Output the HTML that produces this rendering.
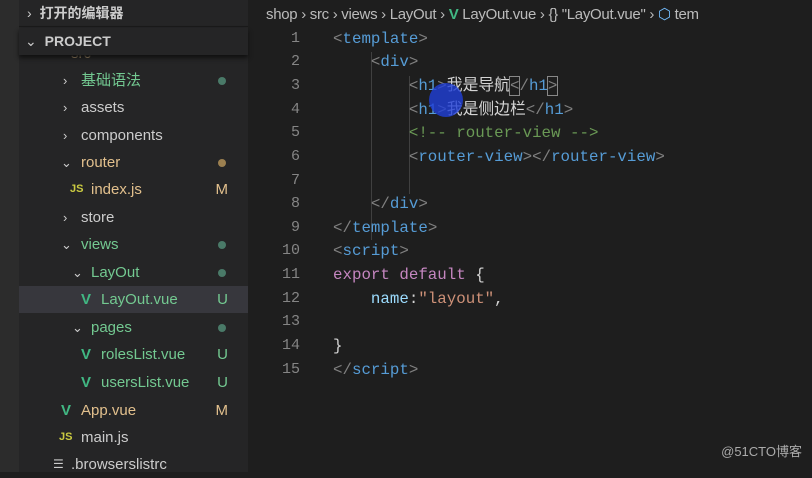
<!DOCTYPE html>
<html><head><meta charset="utf-8"><style>
*{margin:0;padding:0;box-sizing:border-box}
body{width:812px;height:472px;overflow:hidden;background:#1e1e1e;font-family:"Liberation Sans","Noto Sans CJK SC",sans-serif;position:relative}
#act{position:absolute;left:0;top:0;width:19px;height:472px;background:#2c2c2c}
#side{position:absolute;left:19px;top:0;width:229px;height:472px;background:#252526;color:#ccc}
.hdr{position:absolute;left:0;width:229px;height:27px;font-size:14px;font-weight:bold;color:#ccc;line-height:27px}
.row{position:absolute;left:0;width:229px;height:27px;line-height:27px;font-size:15px}
.row .b{position:absolute;right:20px;top:0}
.dot{position:absolute;right:22px;top:10px;width:8px;height:8px;border-radius:50%}
.chev{position:absolute;font-size:13px;color:#ccc}
.vue{color:#41b883;font-weight:bold;position:absolute;font-size:15px}
.js{color:#cbcb41;font-weight:bold;font-size:11px;position:absolute}
.g{color:#73c991}.o{color:#e2c08d}
#ed{position:absolute;left:248px;top:0;right:0;bottom:0}
.bc{position:absolute;top:5px;left:18px;font-size:15px;color:#bbb;white-space:nowrap;letter-spacing:-0.3px}
.ln{position:absolute;left:0;width:52px;text-align:right;font-family:"Liberation Mono",monospace;font-size:15px;color:#858585;line-height:20px;height:20px}
.cl{position:absolute;left:85px;font-family:"Liberation Mono","Noto Sans CJK SC",monospace;font-size:15.8px;color:#d4d4d4;white-space:pre;line-height:20px;height:20px}
.p{color:#808080}.t{color:#569cd6}.c{color:#6a9955}.s{color:#ce9178}.k{color:#c586c0}.n{color:#9cdcfe}
.guide{position:absolute;width:1px;background:#404040}
</style></head><body>
<div id="act"></div>
<div id="side">
<div class="row" style="top:40px"><span class="o" style="position:absolute;left:52px">src</span></div>
<div class="hdr" style="top:0;border-bottom:1px solid #1a1a1a;background:#252526"><span style="margin-left:8px;font-weight:normal">›</span> <span style="margin-left:4px">打开的编辑器</span></div>
<div class="hdr" style="top:28px;background:#252526;z-index:2;box-shadow:0 3px 4px #111"><span style="margin-left:6px;font-weight:normal">⌄</span> <span style="margin-left:4px">PROJECT</span></div>
<div class="row" style="top:67px"><span class="chev" style="left:44px">›</span><span class="g" style="position:absolute;left:62px">基础语法</span><span class="dot" style="background:#4a7a68"></span></div>
<div class="row" style="top:94px"><span class="chev" style="left:44px">›</span><span style="position:absolute;left:62px">assets</span></div>
<div class="row" style="top:122px"><span class="chev" style="left:44px">›</span><span style="position:absolute;left:62px">components</span></div>
<div class="row" style="top:149px"><span class="chev" style="left:42px">⌄</span><span class="o" style="position:absolute;left:62px">router</span><span class="dot" style="background:#9c8050"></span></div>
<div class="row" style="top:176px"><span class="js" style="left:51px">JS</span><span class="o" style="position:absolute;left:72px">index.js</span><span class="b o">M</span></div>
<div class="row" style="top:204px"><span class="chev" style="left:44px">›</span><span style="position:absolute;left:62px">store</span></div>
<div class="row" style="top:231px"><span class="chev" style="left:42px">⌄</span><span class="g" style="position:absolute;left:62px">views</span><span class="dot" style="background:#4a7a68"></span></div>
<div class="row" style="top:259px"><span class="chev" style="left:53px">⌄</span><span class="g" style="position:absolute;left:72px">LayOut</span><span class="dot" style="background:#4a7a68"></span></div>
<div class="row" style="top:286px;background:#37373d"><span class="vue" style="left:62px">V</span><span class="g" style="position:absolute;left:82px">LayOut.vue</span><span class="b g">U</span></div>
<div class="row" style="top:314px"><span class="chev" style="left:53px">⌄</span><span class="g" style="position:absolute;left:72px">pages</span><span class="dot" style="background:#4a7a68"></span></div>
<div class="row" style="top:341px"><span class="vue" style="left:62px">V</span><span class="g" style="position:absolute;left:82px">rolesList.vue</span><span class="b g">U</span></div>
<div class="row" style="top:369px"><span class="vue" style="left:62px">V</span><span class="g" style="position:absolute;left:82px">usersList.vue</span><span class="b g">U</span></div>
<div class="row" style="top:397px"><span class="vue" style="left:42px">V</span><span class="o" style="position:absolute;left:62px">App.vue</span><span class="b o">M</span></div>
<div class="row" style="top:424px"><span class="js" style="left:40px">JS</span><span style="position:absolute;left:62px">main.js</span></div>
<div class="row" style="top:451px"><span style="position:absolute;left:34px;font-size:12px">☰</span><span style="position:absolute;left:52px">.browserslistrc</span></div>
</div>
<div id="ed">
<div class="bc">shop › src › views › LayOut › <span style="color:#41b883;font-weight:bold">V</span> LayOut.vue › {} "LayOut.vue" › <span style="color:#75beff">⬡</span> tem</div>
<div class="guide" style="left:123px;top:52px;height:188px"></div>
<div class="guide" style="left:161px;top:76px;height:118px"></div>
<div class="ln" style="top:29px">1</div><div class="cl" style="top:29px"><span class="p">&lt;</span><span class="t">template</span><span class="p">&gt;</span></div>
<div class="ln" style="top:52px">2</div><div class="cl" style="top:52px">    <span class="p">&lt;</span><span class="t">div</span><span class="p">&gt;</span></div>
<div class="ln" style="top:76px">3</div><div class="cl" style="top:76px">        <span class="p">&lt;</span><span class="t">h1</span><span class="p">&gt;</span>我是导航<span class="p" style="outline:1px solid #888">&lt;</span><span class="p">/</span><span class="t">h1</span><span class="p" style="outline:1px solid #888">&gt;</span></div>
<div class="ln" style="top:100px">4</div><div class="cl" style="top:100px">        <span class="p">&lt;</span><span class="t">h1</span><span class="p">&gt;</span>我是侧边栏<span class="p">&lt;/</span><span class="t">h1</span><span class="p">&gt;</span></div>
<div class="ln" style="top:123px">5</div><div class="cl c" style="top:123px">        &lt;!-- router-view --&gt;</div>
<div class="ln" style="top:147px">6</div><div class="cl" style="top:147px">        <span class="p">&lt;</span><span class="t">router-view</span><span class="p">&gt;&lt;/</span><span class="t">router-view</span><span class="p">&gt;</span></div>
<div class="ln" style="top:171px">7</div>
<div class="ln" style="top:194px">8</div><div class="cl" style="top:194px">    <span class="p">&lt;/</span><span class="t">div</span><span class="p">&gt;</span></div>
<div class="ln" style="top:218px">9</div><div class="cl" style="top:218px"><span class="p">&lt;/</span><span class="t">template</span><span class="p">&gt;</span></div>
<div class="ln" style="top:241px">10</div><div class="cl" style="top:241px"><span class="p">&lt;</span><span class="t">script</span><span class="p">&gt;</span></div>
<div class="ln" style="top:265px">11</div><div class="cl" style="top:265px"><span class="k">export default</span> {</div>
<div class="ln" style="top:289px">12</div><div class="cl" style="top:289px">    <span class="n">name</span>:<span class="s">"layout"</span>,</div>
<div class="ln" style="top:312px">13</div>
<div class="ln" style="top:336px">14</div><div class="cl" style="top:336px">}</div>
<div class="ln" style="top:360px">15</div><div class="cl" style="top:360px"><span class="p">&lt;/</span><span class="t">script</span><span class="p">&gt;</span></div>
<div style="position:absolute;left:181px;top:83px;width:34px;height:34px;border-radius:50%;background:#1f3fd8;opacity:0.8"></div>
<div style="position:absolute;right:10px;bottom:12px;font-size:13px;color:#aaa">@51CTO博客</div>
</div>
</body></html>
